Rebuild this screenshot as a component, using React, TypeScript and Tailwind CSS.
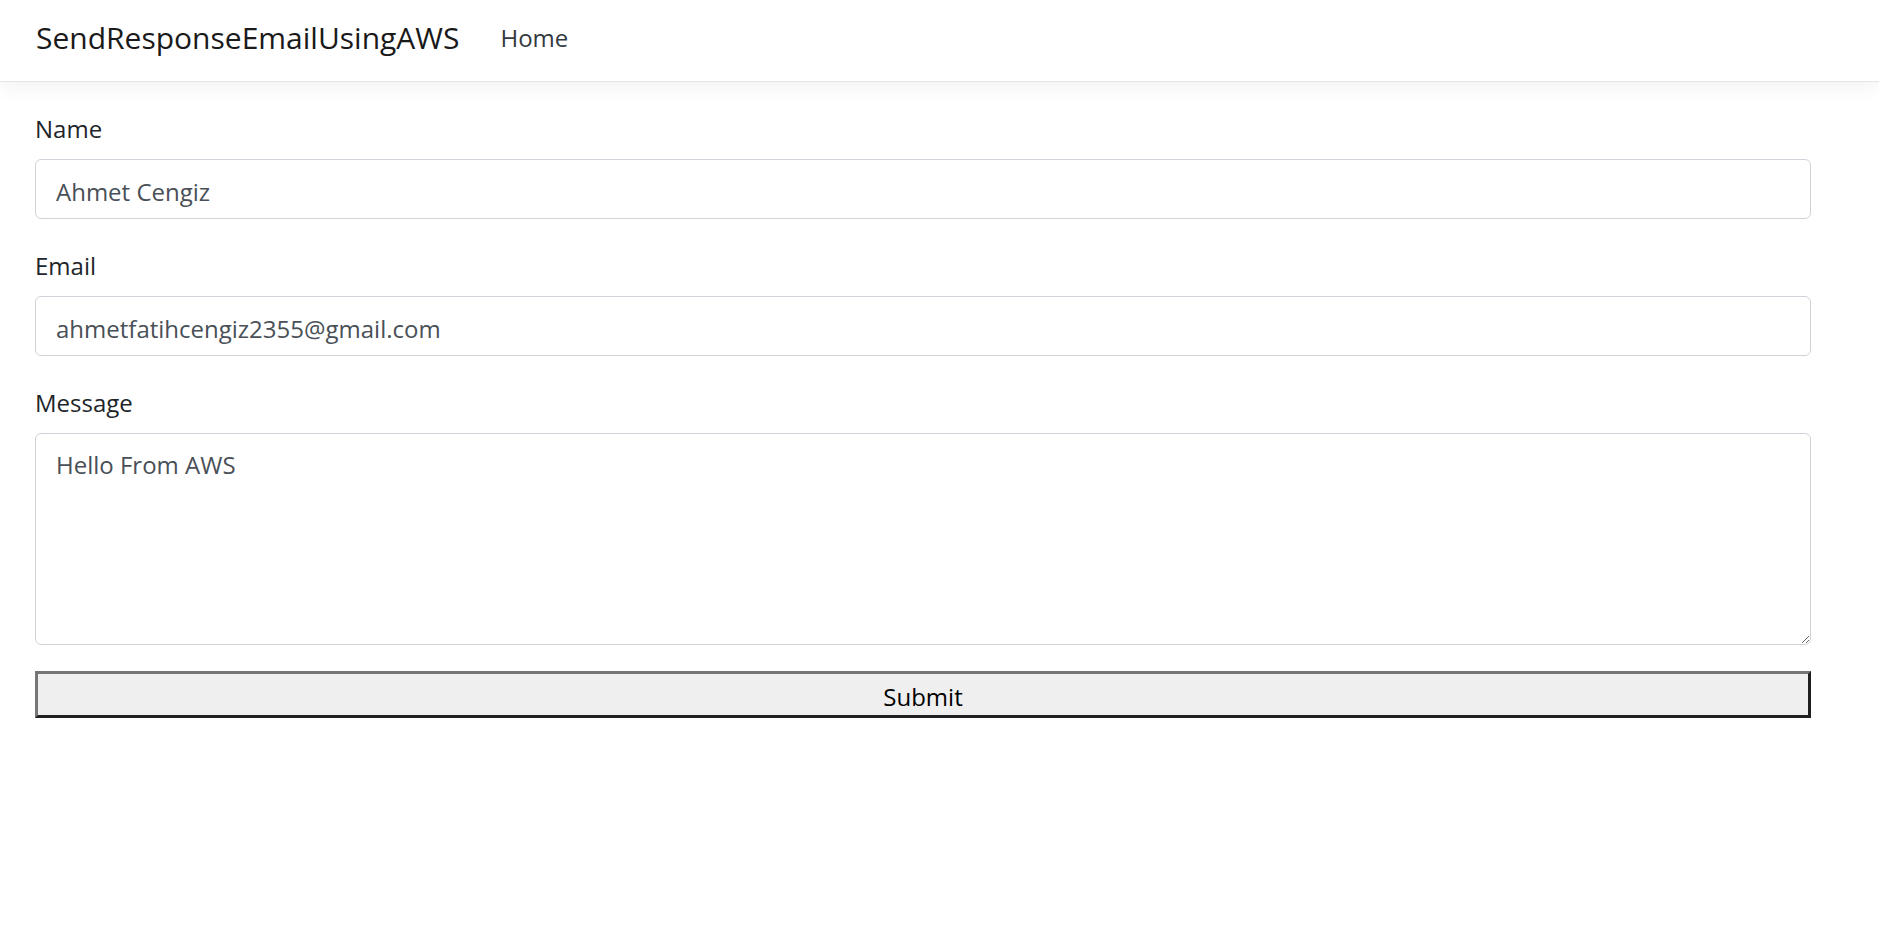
import type { ReactNode } from "react";

const font = { fontFamily: '"Open Sans", "Noto Sans", sans-serif' };

function Field({ label, children }: { label: string; children: ReactNode }) {
  return (
    <div className="mb-[29px]">
      <label className="mb-[12px] block text-[24px] leading-[36px] text-[#212529]">
        {label}
      </label>
      {children}
    </div>
  );
}

const inputClass =
  "block w-full rounded-[6px] border border-[#ced4da] bg-white pl-[20px] pr-[18px] pt-[13px] pb-[9px] text-[24px] leading-[36px] text-[#495057] outline-none";

export default function App() {
  return (
    <div className="min-h-screen bg-white" style={font}>
      <header className="flex h-[82px] items-start border-b border-[#e5e5e5] bg-white pl-[36px] pt-[15px] shadow-[0_6px_18px_rgba(0,0,0,0.05)]">
        <a className="text-[30px] leading-[45px] text-[#1a1a1a]" href="#">
          SendResponseEmailUsingAWS
        </a>
        <a className="ml-[41px] mt-[5px] text-[24px] leading-[36px] text-[#343a40]" href="#">
          Home
        </a>
      </header>

      <main className="pl-[35px] pt-[29px]">
        <form className="w-[1776px]" onSubmit={(e) => e.preventDefault()}>
          <Field label="Name">
            <input className={`${inputClass} h-[60px]`} defaultValue="Ahmet Cengiz" style={font} />
          </Field>
          <Field label="Email">
            <input
              className={`${inputClass} h-[60px]`}
              defaultValue="ahmetfatihcengiz2355@gmail.com"
              style={font}
            />
          </Field>
          <div>
            <label className="mb-[12px] block text-[24px] leading-[36px] text-[#212529]">
              Message
            </label>
            <textarea
              className={`${inputClass} h-[212px]`}
              defaultValue="Hello From AWS"
              style={font}
            />
          </div>
          <button
            className="mt-[26px] block h-[47px] w-full border-[3px] border-t-[#767676] border-l-[#767676] border-r-[#202020] border-b-[#202020] bg-[#efefef] pt-[5px] text-[24px] leading-[36px] text-black"
            style={font}
            type="submit"
          >
            Submit
          </button>
        </form>
      </main>
    </div>
  );
}
